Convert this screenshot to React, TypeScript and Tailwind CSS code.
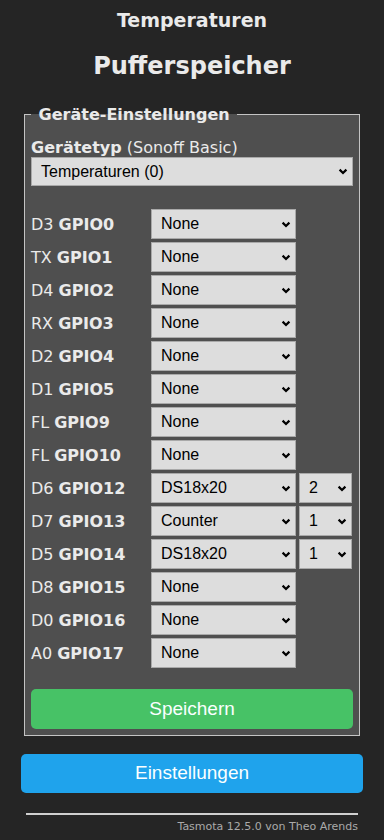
import React from "react";

const rows: [string, string, string, string?][] = [
  ["D3", "GPIO0", "None"],
  ["TX", "GPIO1", "None"],
  ["D4", "GPIO2", "None"],
  ["RX", "GPIO3", "None"],
  ["D2", "GPIO4", "None"],
  ["D1", "GPIO5", "None"],
  ["FL", "GPIO9", "None"],
  ["FL", "GPIO10", "None"],
  ["D6", "GPIO12", "DS18x20", "2"],
  ["D7", "GPIO13", "Counter", "1"],
  ["D5", "GPIO14", "DS18x20", "1"],
  ["D8", "GPIO15", "None"],
  ["D0", "GPIO16", "None"],
  ["A0", "GPIO17", "None"],
];

function Chevron() {
  return (
    <svg width="10" height="7" viewBox="0 0 10 7" className="shrink-0">
      <path d="M1.6 1.6 L5 5 L8.4 1.6" stroke="#000" strokeWidth="2.2" fill="none" />
    </svg>
  );
}

function Select({ value, className }: { value: string; className: string }) {
  return (
    <div
      className={
        "flex items-center justify-between bg-[#dddddd] border border-[#a9a9a9] pl-[9px] pr-[4px] text-black text-[16px] leading-[18px] " +
        className
      }
      style={{ fontFamily: '"Liberation Sans", Arial, sans-serif' }}
    >
      <span>{value}</span>
      <Chevron />
    </div>
  );
}

export default function App() {
  return (
    <div
      className="min-h-[840px] bg-[#252525] text-[#eaeaea]"
      style={{ fontFamily: '"DejaVu Sans", Verdana, sans-serif' }}
    >
      <div className="w-[342px] mx-auto pt-[9px]">
        <div className="text-center">
          <div className="text-[19px] leading-[22px] font-bold">Temperaturen</div>
          <div className="text-[24px] leading-[28px] font-bold mt-[21px]">Pufferspeicher</div>
        </div>

        <fieldset className="mx-[3px] mt-[25px] border border-[#c4c4c4] bg-[#4f4f4f] px-[6px] pb-[6px]">
          <legend className="px-[2px] text-[16px] leading-[19px] font-bold">
            {"\u00a0Geräte-Einstellungen\u00a0"}
          </legend>
          <div className="mt-[14px] text-[16px] leading-[19px]">
            <b>Gerätetyp</b> (Sonoff Basic)
          </div>
          <Select value="Temperaturen (0)" className="h-[29px] w-full" />

          <div className="mt-[23px] flex flex-col gap-[3px]">
            {rows.map(([pin, gpio, val, idx]) => (
              <div key={gpio} className="flex items-center h-[30px]">
                <div className="w-[120px] text-[16px] leading-[19px] whitespace-nowrap">
                  {pin} <b>{gpio}</b>
                </div>
                <Select value={val} className="h-[30px] w-[145px]" />
                {idx && <Select value={idx} className="h-[30px] w-[53px] ml-[3px]" />}
              </div>
            ))}
          </div>

          <div
            className="mt-[21px] h-[40px] rounded-[5px] bg-[#47c266] text-[#faffff] text-[19px] flex items-center justify-center"
            style={{ fontFamily: '"Liberation Sans", Arial, sans-serif' }}
          >
            Speichern
          </div>
        </fieldset>

        <div
          className="mt-[18px] h-[39px] rounded-[5px] bg-[#1fa3ec] text-[#faffff] text-[19px] flex items-center justify-center"
          style={{ fontFamily: '"Liberation Sans", Arial, sans-serif' }}
        >
          Einstellungen
        </div>

        <div className="mx-[5px] mt-[20px] border-t-2 border-[#d0d0d0]" />
        <div className="mx-[5px] mt-[5px] text-right text-[11px] leading-[13px] text-[#aaaaaa]">
          Tasmota 12.5.0 von Theo Arends
        </div>
      </div>
    </div>
  );
}
